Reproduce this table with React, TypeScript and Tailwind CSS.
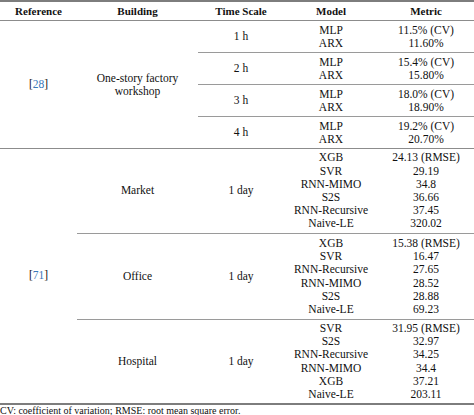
import React from "react";

const serif = { fontFamily: '"Liberation Serif", "Times New Roman", serif' };

type Pair = { m: string; v: string };

const sec1: { t: string; rows: Pair[] }[] = [
  { t: "1 h", rows: [{ m: "MLP", v: "11.5% (CV)" }, { m: "ARX", v: "11.60%" }] },
  { t: "2 h", rows: [{ m: "MLP", v: "15.4% (CV)" }, { m: "ARX", v: "15.80%" }] },
  { t: "3 h", rows: [{ m: "MLP", v: "18.0% (CV)" }, { m: "ARX", v: "18.90%" }] },
  { t: "4 h", rows: [{ m: "MLP", v: "19.2% (CV)" }, { m: "ARX", v: "20.70%" }] },
];

const sec2: { b: string; h: string; rows: Pair[] }[] = [
  {
    b: "Market",
    h: "h-[85px]",
    rows: [
      { m: "XGB", v: "24.13 (RMSE)" },
      { m: "SVR", v: "29.19" },
      { m: "RNN-MIMO", v: "34.8" },
      { m: "S2S", v: "36.66" },
      { m: "RNN-Recursive", v: "37.45" },
      { m: "Naive-LE", v: "320.02" },
    ],
  },
  {
    b: "Office",
    h: "h-[86px]",
    rows: [
      { m: "XGB", v: "15.38 (RMSE)" },
      { m: "SVR", v: "16.47" },
      { m: "RNN-Recursive", v: "27.65" },
      { m: "RNN-MIMO", v: "28.52" },
      { m: "S2S", v: "28.88" },
      { m: "Naive-LE", v: "69.23" },
    ],
  },
  {
    b: "Hospital",
    h: "h-[83px]",
    rows: [
      { m: "SVR", v: "31.95 (RMSE)" },
      { m: "S2S", v: "32.97" },
      { m: "RNN-Recursive", v: "34.25" },
      { m: "RNN-MIMO", v: "34.4" },
      { m: "XGB", v: "37.21" },
      { m: "Naive-LE", v: "203.11" },
    ],
  },
];

export default function App() {
  return (
    <div className="w-[474px] h-[415px] bg-white text-[#111111] text-[11.5px] overflow-hidden" style={serif}>
      <div className="border-t-2 border-b-2 border-[#7d7d7d]">
        {/* header */}
        <div className="flex h-[19px] items-center border-b border-[#8c8c8c] font-bold leading-none text-[11px]">
          <div className="w-[77px] text-center">Reference</div>
          <div className="w-[121px] text-center">Building</div>
          <div className="w-[86px] text-center">Time Scale</div>
          <div className="w-[94px] text-center">Model</div>
          <div className="w-[96px] text-center">Metric</div>
        </div>

        {/* section 1 */}
        <div className="flex border-b border-[#8c8c8c]">
          <div className="w-[77px] flex items-center justify-center">
            [<span className="text-[#3a78b8]">28</span>]
          </div>
          <div className="w-[121px] flex items-center justify-center text-center leading-[13px]">
            One-story factory
            <br />
            workshop
          </div>
          <div className="flex-1 flex flex-col">
            {sec1.map((r, i) => (
              <div
                key={r.t}
                className={
                  i < 3
                    ? "flex h-[32px] border-b border-[#9a9a9a] items-center"
                    : "flex h-[31px] items-center"
                }
              >
                <div className="w-[86px] text-center">{r.t}</div>
                <div className="w-[94px] text-center leading-[13px]">
                  {r.rows.map((p) => (
                    <div key={p.m}>{p.m}</div>
                  ))}
                </div>
                <div className="w-[96px] text-center leading-[13px]">
                  {r.rows.map((p) => (
                    <div key={p.v}>{p.v}</div>
                  ))}
                </div>
              </div>
            ))}
          </div>
        </div>

        {/* section 2 */}
        <div className="flex">
          <div className="w-[77px] flex items-center justify-center">
            [<span className="text-[#3a78b8]">71</span>]
          </div>
          <div className="flex-1 flex flex-col">
            {sec2.map((s, i) => (
              <div
                key={s.b}
                className={
                  (i < 2 ? "border-b border-[#9a9a9a] " : "") + "flex items-center " + s.h
                }
              >
                <div className="w-[121px] text-center">{s.b}</div>
                <div className="w-[86px] text-center">1 day</div>
                <div className="w-[94px] text-center leading-[13.2px]">
                  {s.rows.map((p) => (
                    <div key={p.m}>{p.m}</div>
                  ))}
                </div>
                <div className="w-[96px] text-center leading-[13.2px]">
                  {s.rows.map((p) => (
                    <div key={p.v}>{p.v}</div>
                  ))}
                </div>
              </div>
            ))}
          </div>
        </div>
      </div>
      <div className="text-[10px] leading-[10px] pt-[1px]">
        CV: coefficient of variation; RMSE: root mean square error.
      </div>
    </div>
  );
}
